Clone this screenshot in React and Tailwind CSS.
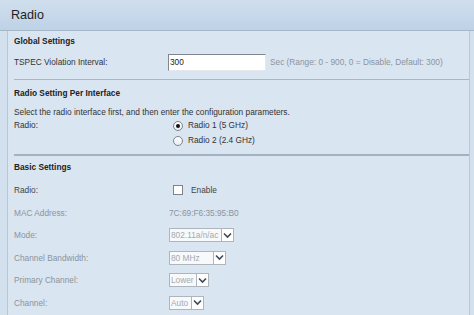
import React from 'react';

// Small helper pieces for the form controls
function RadioDot({ checked }) {
  return (
    <span className="w-[10px] h-[10px] rounded-full border border-[#7d848c] bg-gradient-to-b from-[#ffffff] to-[#e9edf1] flex items-center justify-center">
      {checked && <span className="w-[4px] h-[4px] rounded-full bg-[#111]"></span>}
    </span>
  );
}

function Select({ value, width }) {
  return (
    <div className={`flex h-[14px] border border-[#aeb5bd] bg-[#f8f9fa] ${width}`}>
      <div className="flex-1 flex items-center pl-[1px] text-[#a3a9b0] leading-none">{value}</div>
      <div className="w-[12px] h-full border-l border-[#aeb5bd] bg-white flex items-center justify-center">
        <svg width="9" height="7" viewBox="0 0 9 7">
          <path d="M1 1.5 L4.5 5 L8 1.5" fill="none" stroke="#3c4a58" strokeWidth="1.6" />
        </svg>
      </div>
    </div>
  );
}

function Row({ label, labelClass = 'text-[#3a3a3a]', h = 'h-[22.5px]', children }) {
  return (
    <div className={`flex items-center ${h}`}>
      <div className={`w-[155px] shrink-0 ${labelClass}`}>{label}</div>
      <div className="flex items-center">{children}</div>
    </div>
  );
}

export default function App() {
  const grey = 'text-[#8b949d]';
  return (
    <div className="w-[474px] h-[315px] overflow-hidden bg-[#d3e0ed] font-['Liberation_Sans',Arial,sans-serif] text-[8.3px] text-[#333]">
      {/* Page title bar */}
      <div className="h-[31px] bg-gradient-to-b from-[#d0dfee] to-[#bed2e6] border-b border-[#a6b7c8] flex items-center pl-[11px]">
        <span className="text-[12.6px] text-[#1f1f1f]">Radio</span>
      </div>

      <div className="ml-[7px] mr-[4px] h-[284px] border-l border-r border-[#b9c8d7] bg-[#d9e5f1] pl-[6px]">
        {/* Global Settings */}
        <div className="h-[20px] flex items-center font-bold text-[#222]">Global Settings</div>
        <div className="flex items-center h-[22px]">
          <div className="w-[154px] shrink-0">TSPEC Violation Interval:</div>
          <div className="w-[98px] h-[17px] bg-white border border-t-[#7f868e] border-l-[#7f868e] border-r-[#e4e8ec] border-b-[#e4e8ec] flex items-center pl-[1px] text-[#222]">
            300
          </div>
          <span className={`ml-[4px] ${grey}`}>Sec (Range: 0 - 900, 0 = Disable, Default: 300)</span>
        </div>

        <div className="mt-[6px] border-t border-[#a9b7c5]"></div>

        {/* Radio Setting Per Interface */}
        <div className="h-[26px] flex items-center font-bold text-[#222]">Radio Setting Per Interface</div>
        <div className="h-[12px] flex items-center">Select the radio interface first, and then enter the configuration parameters.</div>
        <div className="flex">
          <div className="w-[159px] shrink-0 h-[15px] flex items-center">Radio:</div>
          <div className="flex flex-col">
            <label className="h-[15px] flex items-center gap-[5px]">
              <RadioDot checked />
              <span>Radio 1 (5 GHz)</span>
            </label>
            <label className="h-[15px] flex items-center gap-[5px]">
              <RadioDot />
              <span>Radio 2 (2.4 GHz)</span>
            </label>
          </div>
        </div>

        <div className="mt-[6px] border-t-2 border-[#a3b2c1]"></div>

        {/* Basic Settings */}
        <div className="h-[23px] flex items-center font-bold text-[#222]">Basic Settings</div>
        <Row label="Radio:" labelClass="text-[#444]">
          <span className="ml-[4px] w-[10px] h-[10px] border border-[#7d848c] bg-white"></span>
          <span className="ml-[8px] text-[#444]">Enable</span>
        </Row>
        <Row label="MAC Address:" labelClass={grey}>
          <span className={grey}>7C:69:F6:35:95:B0</span>
        </Row>
        <Row label="Mode:" labelClass={grey}>
          <Select value="802.11a/n/ac" width="w-[65px]" />
        </Row>
        <Row label="Channel Bandwidth:" labelClass={grey}>
          <Select value="80 MHz" width="w-[57px]" />
        </Row>
        <Row label="Primary Channel:" labelClass={grey}>
          <Select value="Lower" width="w-[40px]" />
        </Row>
        <Row label="Channel:" labelClass={grey}>
          <Select value="Auto" width="w-[35px]" />
        </Row>
      </div>
    </div>
  );
}
